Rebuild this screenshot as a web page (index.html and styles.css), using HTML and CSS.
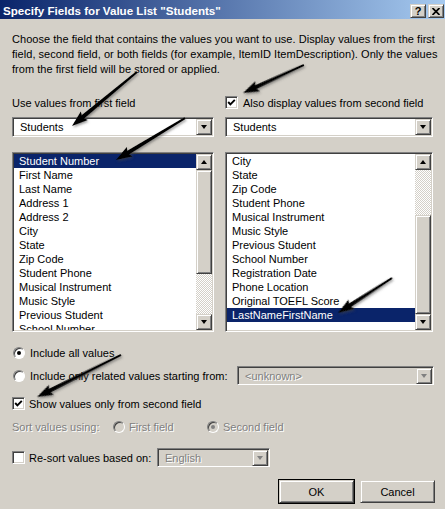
FILE: index.html
```html
<!DOCTYPE html>
<html lang="en">
<head>
    <meta charset="UTF-8">
    <title>Specify Fields for Value List</title>
    <link rel="stylesheet" href="styles.css">
</head>
<body>
    <div class="dialog">
        <div class="titlebar">
            <span class="title">Specify Fields for Value List "Students"</span>
            <div class="title-buttons">
                <span class="tb-btn raised">?</span>
                <span class="tb-btn raised">
                    <svg width="8" height="7" viewBox="0 0 8 7"><path d="M0.5,0 L7.5,7 M7.5,0 L0.5,7" stroke="#000" stroke-width="1.7"/></svg>
                </span>
            </div>
        </div>

        <div class="content">
            <p class="intro">
                Choose the field that contains the values you want to use. Display values from the first<br>
                field, second field, or both fields (for example, ItemID ItemDescription). Only the values<br>
                from the first field will be stored or applied.
            </p>

            <div class="columns">
                <div class="col">
                    <div class="col-head">Use values from first field</div>
                    <div class="combo">
                        <span class="combo-text">Students</span>
                        <span class="drop raised"><i class="tri-down"></i></span>
                    </div>
                    <div class="listbox list-first">
                        <ul class="items">
                            <li class="selected">Student Number</li>
                            <li>First Name</li>
                            <li>Last Name</li>
                            <li>Address 1</li>
                            <li>Address 2</li>
                            <li>City</li>
                            <li>State</li>
                            <li>Zip Code</li>
                            <li>Student Phone</li>
                            <li>Musical Instrument</li>
                            <li>Music Style</li>
                            <li>Previous Student</li>
                            <li>School Number</li>
                        </ul>
                        <div class="sb">
                            <span class="sb-btn raised"><i class="tri-up"></i></span>
                            <span class="sb-thumb raised"></span>
                            <span class="sb-track"></span>
                            <span class="sb-btn raised"><i class="tri-down"></i></span>
                        </div>
                    </div>
                </div>

                <div class="col">
                    <div class="col-head">
                        <span class="check">
                            <svg width="9" height="9" viewBox="0 0 9 9"><polyline points="1.2,4 3.4,6.4 7.8,1.8" fill="none" stroke="#000" stroke-width="1.9"/></svg>
                        </span>
                        <span class="check-label">Also display values from second field</span>
                    </div>
                    <div class="combo">
                        <span class="combo-text">Students</span>
                        <span class="drop raised"><i class="tri-down"></i></span>
                    </div>
                    <div class="listbox list-second">
                        <ul class="items">
                            <li>City</li>
                            <li>State</li>
                            <li>Zip Code</li>
                            <li>Student Phone</li>
                            <li>Musical Instrument</li>
                            <li>Music Style</li>
                            <li>Previous Student</li>
                            <li>School Number</li>
                            <li>Registration Date</li>
                            <li>Phone Location</li>
                            <li>Original TOEFL Score</li>
                            <li class="selected">LastNameFirstName</li>
                        </ul>
                        <div class="sb">
                            <span class="sb-btn raised"><i class="tri-up"></i></span>
                            <span class="sb-track"></span>
                            <span class="sb-thumb raised"></span>
                            <span class="sb-btn raised"><i class="tri-down"></i></span>
                        </div>
                    </div>
                </div>
            </div>

            <div class="opt opt-first">
                <span class="radio"><i class="dot"></i></span>
                <span>Include all values</span>
            </div>
            <div class="opt opt-tight">
                <span class="radio"></span>
                <span class="related-label">Include only related values starting from:</span>
                <div class="combo combo-off combo-related">
                    <span class="combo-text">&lt;unknown&gt;</span>
                    <span class="drop raised"><i class="tri-down"></i></span>
                </div>
            </div>
            <div class="opt opt-gap">
                <span class="check">
                    <svg width="9" height="9" viewBox="0 0 9 9"><polyline points="1.2,4 3.4,6.4 7.8,1.8" fill="none" stroke="#000" stroke-width="1.9"/></svg>
                </span>
                <span class="check-label">Show values only from second field</span>
            </div>
            <div class="opt opt-tight off">
                <span class="sort-label">Sort values using:</span>
                <span class="sort-choice">
                    <span class="radio radio-off"></span>
                    <span>First field</span>
                </span>
                <span class="sort-choice">
                    <span class="radio radio-off"><i class="dot"></i></span>
                    <span>Second field</span>
                </span>
            </div>
            <div class="opt opt-resort">
                <span class="check"></span>
                <span class="check-label resort-label">Re-sort values based on:</span>
                <div class="combo combo-off combo-lang">
                    <span class="combo-text">English</span>
                    <span class="drop raised"><i class="tri-down"></i></span>
                </div>
            </div>

            <div class="buttons">
                <button class="push raised default">OK</button>
                <button class="push raised">Cancel</button>
            </div>
        </div>

        <!-- hand-drawn callout arrows laid over the dialog -->
        <svg class="arrows" width="445" height="509" viewBox="0 0 445 509">
            <defs>
                <filter id="shade" x="-20%" y="-20%" width="140%" height="140%">
                    <feDropShadow dx="1" dy="1.5" stdDeviation="0.8" flood-color="#444" flood-opacity="0.55"/>
                </filter>
                <path id="tip" d="M0,0 L-16,-5.5 L-13.5,0 L-16,5.5 Z"/>
            </defs>
            <g filter="url(#shade)" fill="#050505">
                <g transform="translate(72 126) rotate(140.3)">
                    <path d="M-84.5,-1 L-13,-2.1 L-13,2.1 L-84.5,1 Z"/>
                    <use href="#tip"/>
                </g>
                <g transform="translate(116 160) rotate(148.7)">
                    <path d="M-80.8,-1 L-13,-2.1 L-13,2.1 L-80.8,1 Z"/>
                    <use href="#tip"/>
                </g>
                <g transform="translate(243 93) rotate(155.3)">
                    <path d="M-67,-1 L-13,-2.1 L-13,2.1 L-67,1 Z"/>
                    <use href="#tip"/>
                </g>
                <g transform="translate(338 313) rotate(147.1)">
                    <path d="M-64.4,-1 L-13,-2.1 L-13,2.1 L-64.4,1 Z"/>
                    <use href="#tip"/>
                </g>
                <g transform="translate(37 397) rotate(153.4)">
                    <path d="M-93.9,-1 L-13,-2.1 L-13,2.1 L-93.9,1 Z"/>
                    <use href="#tip"/>
                </g>
            </g>
        </svg>
    </div>
</body>
</html>
```

FILE: styles.css
```css
* {
    box-sizing: border-box;
}
body {
    margin: 0;
    background: #d4d0c8;
    font-family: "Liberation Sans", Arial, sans-serif;
    font-size: 11px;
    color: #000;
}
.dialog {
    position: relative;
    width: 445px;
    height: 509px;
    background: #d4d0c8;
    overflow: hidden;
}

/* 3D borders, classic style */
.raised {
    background: #d4d0c8;
    border: 1px solid;
    border-color: #d4d0c8 #404040 #404040 #d4d0c8;
    box-shadow: inset 1px 1px #fff, inset -1px -1px #808080;
}

/* title bar */
.titlebar {
    height: 19px;
    display: flex;
    align-items: center;
    justify-content: space-between;
    padding: 1px 1px 0 3px;
    background: linear-gradient(to right, #0a246a 0%, #a6caf0 100%);
}
.title {
    color: #fff;
    font-weight: bold;
    font-size: 11.6px;
}
.title-buttons {
    display: flex;
    gap: 2px;
    margin-top: 2px;
}
.tb-btn {
    width: 16px;
    height: 14px;
    display: flex;
    align-items: center;
    justify-content: center;
    font-weight: bold;
    font-size: 11px;
    line-height: 1;
}

.content {
    padding: 13px 0 0 12px;
}
.intro {
    margin: 0;
    line-height: 15px;
    letter-spacing: 0.04px;
    white-space: nowrap;
}

/* two field columns */
.columns {
    display: grid;
    grid-template-columns: 202px 208px;
    column-gap: 11px;
    margin-top: 18px;
}
.col-head {
    height: 15px;
    display: flex;
    align-items: center;
}
.check-label {
    margin-left: 5px;
}

.combo {
    margin-top: 7px;
    height: 20px;
    display: flex;
    align-items: center;
    background: #fff;
    padding: 2px;
    border: 1px solid;
    border-color: #808080 #fff #fff #808080;
    box-shadow: inset 1px 1px #404040, inset -1px -1px #d4d0c8;
}
.combo-text {
    flex: 1;
    padding-left: 5px;
}
.drop {
    width: 16px;
    height: 16px;
    margin-right: -1px;
    display: flex;
    align-items: center;
    justify-content: center;
}
.tri-down, .tri-up {
    display: block;
    width: 0;
    height: 0;
    border-left: 3.5px solid transparent;
    border-right: 3.5px solid transparent;
}
.tri-down {
    border-top: 4px solid #000;
}
.tri-up {
    border-bottom: 4px solid #000;
}

.combo-off {
    margin-top: 0;
    height: 19px;
    background: #d4d0c8;
}
.combo-off .combo-text {
    color: #808080;
    text-shadow: 1px 1px 0 #fff;
}
.combo-off .tri-down {
    border-top-color: #808080;
}
.combo-related {
    width: 197px;
}
.combo-lang {
    width: 113px;
}

/* list boxes */
.listbox {
    margin-top: 15px;
    height: 180px;
    display: flex;
    background: #fff;
    padding: 1px;
    border: 1px solid;
    border-color: #808080 #fff #fff #808080;
    box-shadow: inset 1px 1px #404040, inset -1px -1px #d4d0c8;
}
.items {
    flex: 1;
    margin: 0;
    padding: 0;
    list-style: none;
    overflow: hidden;
}
.items li {
    height: 14px;
    line-height: 14px;
    padding-left: 5px;
    white-space: nowrap;
}
.items li.selected {
    background: #0a246a;
    color: #fff;
}
.sb {
    width: 16px;
    display: flex;
    flex-direction: column;
}
.sb-btn {
    height: 16px;
    display: flex;
    align-items: center;
    justify-content: center;
}
.sb-track {
    flex: 1;
    background: repeating-conic-gradient(#d4d0c8 0 25%, #fff 0 50%) 0 0 / 2px 2px;
}
.sb-thumb {
    flex: 1;
}
.list-first .sb-thumb {
    flex: none;
    height: 104px;
}
.list-second .sb-track {
    flex: none;
    height: 45px;
}

/* option rows */
.opt {
    height: 19px;
    display: flex;
    align-items: center;
}
.opt-first {
    margin-top: 11px;
}
.opt-tight {
    margin-top: 4px;
}
.opt-gap {
    margin-top: 9px;
}
.opt-resort {
    margin-top: 12px;
}

.radio {
    width: 12px;
    height: 12px;
    margin: 0 5px 0 1px;
    flex-shrink: 0;
    border-radius: 50%;
    background: #fff;
    border: 1px solid;
    border-color: #808080 #fff #fff #808080;
    box-shadow: inset 1px 1px #404040;
    display: flex;
    align-items: center;
    justify-content: center;
}
.radio .dot {
    width: 4px;
    height: 4px;
    border-radius: 50%;
    background: #000;
}
.radio-off {
    background: #d4d0c8;
}
.radio-off .dot {
    background: #808080;
}
.related-label {
    width: 207px;
    flex-shrink: 0;
}

.check {
    width: 13px;
    height: 13px;
    flex-shrink: 0;
    background: #fff;
    border: 1px solid;
    border-color: #808080 #fff #fff #808080;
    box-shadow: inset 1px 1px #404040, inset -1px -1px #d4d0c8;
    display: flex;
    align-items: center;
    justify-content: center;
}
.opt .check-label {
    margin-left: 4px;
}
.resort-label {
    width: 128px;
    flex-shrink: 0;
}

.off {
    color: #808080;
    text-shadow: 1px 1px 0 #fff;
}
.sort-label {
    width: 101px;
}
.sort-choice {
    width: 94px;
    display: flex;
    align-items: center;
}
.sort-choice .radio {
    margin-left: 0;
    margin-right: 4px;
}

/* bottom buttons */
.buttons {
    display: flex;
    justify-content: flex-end;
    gap: 6px;
    margin-top: 13px;
    padding-right: 10px;
}
.push {
    width: 75px;
    height: 23px;
    font-family: inherit;
    font-size: 11px;
    color: #000;
    padding: 0;
}
.push.default {
    outline: 1px solid #000;
}

.arrows {
    position: absolute;
    left: 0;
    top: 0;
    pointer-events: none;
}
```
